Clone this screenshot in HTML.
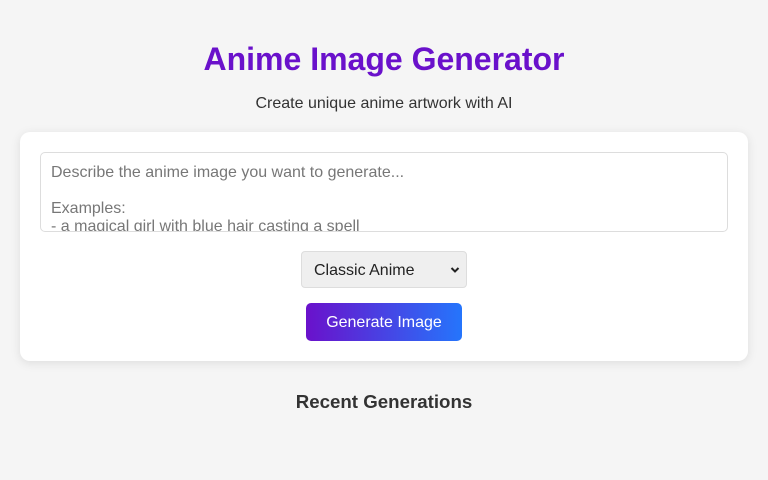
<!DOCTYPE html>
<html><head><style>
body{margin:0;background:#f5f5f5;font-family:"Liberation Sans",sans-serif;width:768px;height:480px;overflow:hidden;position:relative}
h1{position:absolute;top:40px;left:0;width:768px;margin:0;text-align:center;color:#6a11cb;font-size:32px;font-weight:bold;line-height:38px}
.sub{position:absolute;top:94px;width:768px;text-align:center;color:#333;font-size:16px;line-height:20px}
.card{position:absolute;left:20px;top:132px;width:728px;height:229px;background:#fff;border-radius:10px;box-shadow:0 2px 10px rgba(0,0,0,.1)}
.ta{position:absolute;left:20px;top:20px;border:1px solid #ddd;border-radius:5px;overflow:hidden;color:#777;font-size:16px;line-height:18px;padding:11px 10px 10px;box-sizing:border-box;width:688px;height:80px}
.sel{position:absolute;left:281px;top:119px;width:166px;height:37px;background:#efefef;border:1px solid #ddd;border-radius:4px;box-sizing:border-box;font-size:16px;color:#222;padding:10px 12px 8px;line-height:18px}
.sel svg{position:absolute;right:6px;top:14px}
.btn{position:absolute;left:286px;top:171px;width:156px;height:38px;border-radius:5px;background:linear-gradient(90deg,#6a11cb,#2575fc);color:#fff;font-size:16px;text-align:center;line-height:40px}
h2{position:absolute;top:390px;width:768px;text-align:center;margin:0;font-size:18.7px;color:#333;line-height:24px}
</style></head><body>
<h1>Anime Image Generator</h1>
<div class="sub">Create unique anime artwork with AI</div>
<div class="card">
<div class="ta">Describe the anime image you want to generate...<br><br>Examples:<br>- a magical girl with blue hair casting a spell</div>
<div class="sel">Classic Anime<svg width="10" height="8" viewBox="0 0 10 8"><path d="M1.5 2l3.5 3.5 3.5-3.5" stroke="#222" stroke-width="2" fill="none"/></svg></div>
<div class="btn">Generate Image</div>
</div>
<h2>Recent Generations</h2>
</body></html>
